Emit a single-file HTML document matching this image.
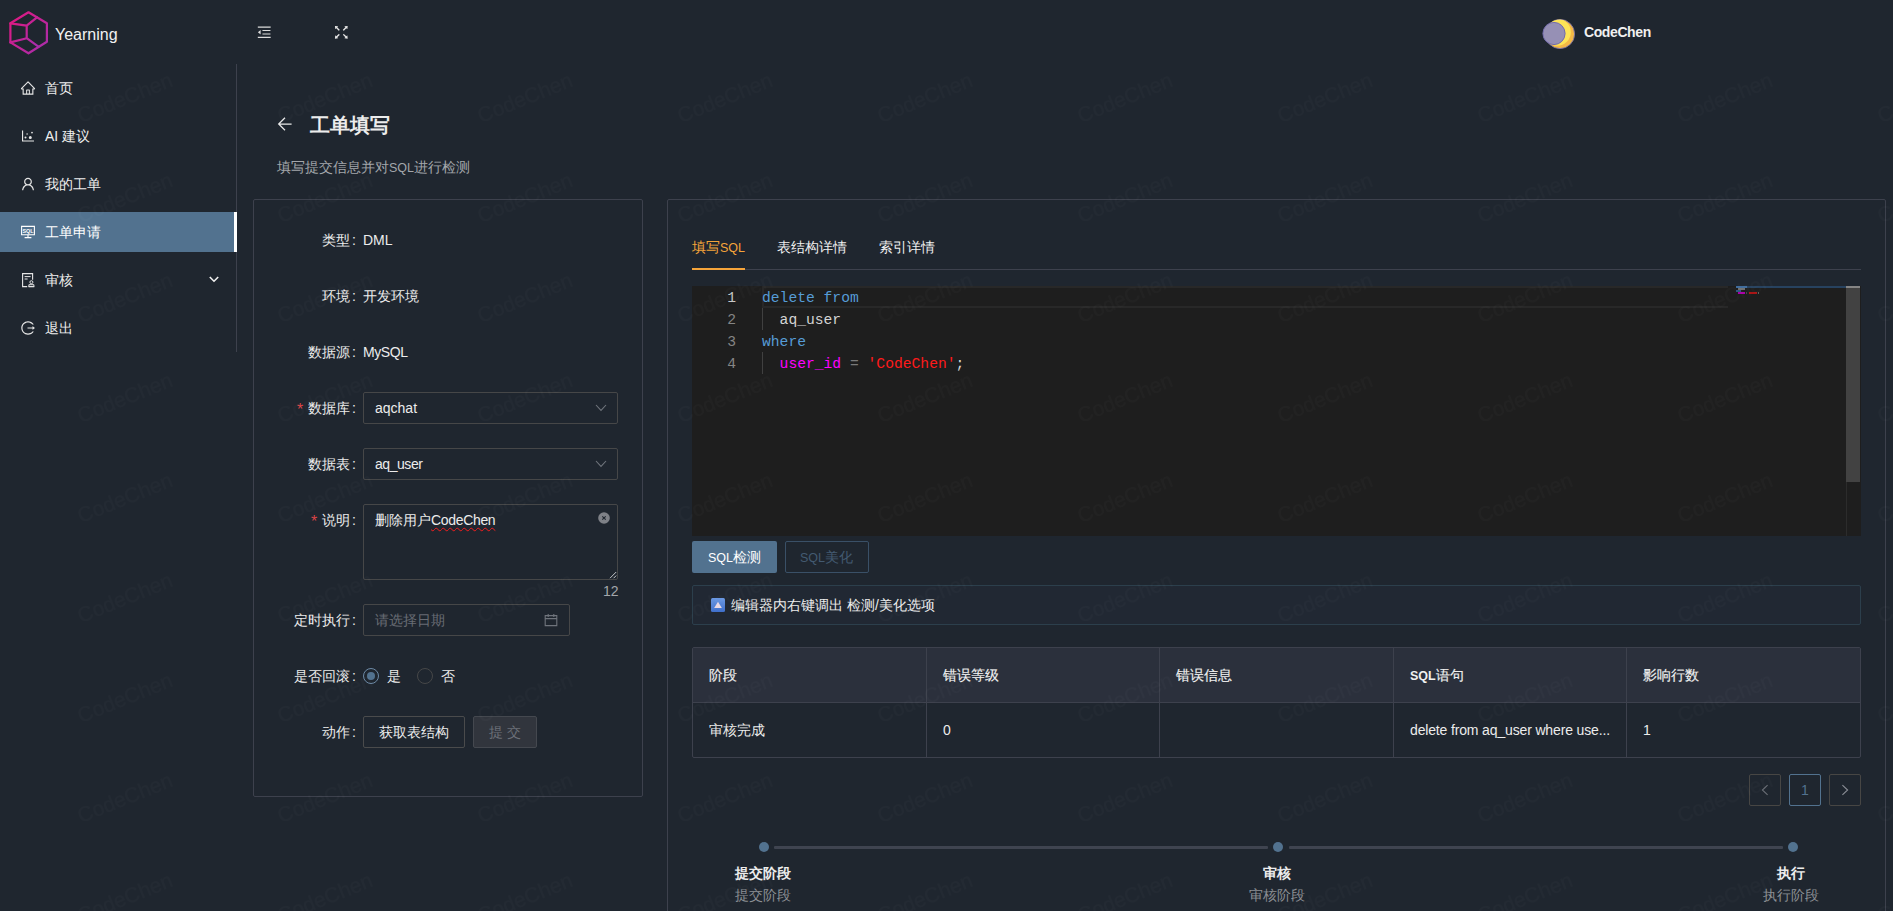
<!DOCTYPE html>
<html lang="zh">
<head>
<meta charset="utf-8">
<title>Yearning</title>
<style>
*{box-sizing:border-box;margin:0;padding:0}
html,body{width:1893px;height:911px;overflow:hidden;background:#1f262f}
body{font-family:"Liberation Sans",sans-serif;font-size:14px;color:#dedede;position:relative}
.abs{position:absolute}
.q{font-size:12.5px}
.t{position:absolute;white-space:nowrap;line-height:22px;height:22px}
svg{display:block;position:absolute;overflow:visible}
/* watermark */
/* sidebar */
#side-border{left:236px;top:64px;width:1px;height:288px;background:#3d414d}
.mi{position:absolute;left:0;width:237px;height:40px}
.mi .t{left:45px;top:9px;color:#eeeeee}
.mi.sel{background:#52728f;border-right:3px solid #fff}
.mi.sel .t{color:#fff}
/* cards */
.card{position:absolute;border:1px solid #3d414d;border-radius:2px}
.lbl{position:absolute;white-space:nowrap;line-height:22px;text-align:right;width:120px;left:236px;color:#ececec}
.req:before{content:"*";color:#dc4446;margin-right:5px;font-size:16px;position:relative;top:2px;font-family:"Liberation Sans",sans-serif}
.lbl i{font-style:normal;margin-left:2px;margin-right:0}
.val{position:absolute;left:363px;white-space:nowrap;line-height:22px;color:#ececec}
.inp{position:absolute;border:1px solid #464748;border-radius:2px}
pre.ln,pre.code{position:absolute;font-family:"Liberation Mono",monospace;font-size:14.67px;line-height:22px;white-space:pre}
pre.ln{color:#858585}
pre.code{color:#d4d4d4}
.k{color:#569cd6}.m{color:#ff00ff}.s{color:#ff1a1a}.o{color:#7a7a7a}
.th{font-weight:500;color:#f0f0f0;-webkit-text-stroke:0.15px #f0f0f0}
.th .q{font-weight:bold;-webkit-text-stroke:0}
.td{color:#ececec;letter-spacing:-0.15px}
.dot{width:10px;height:10px;border-radius:50%;background:#52728f}
.st{width:120px;text-align:center;font-weight:bold;color:#ececec}
.sd{width:120px;text-align:center;color:#8c8f94}
</style>
</head>
<body>
<!-- ============ SIDEBAR ============ -->
<div id="sidebar">
  <svg id="logo" style="left:8px;top:10px" width="42" height="46" viewBox="8 10 42 46">
    <defs><linearGradient id="lg" x1="0" y1="0" x2="1" y2="1"><stop offset="0" stop-color="#e3177f"/><stop offset="1" stop-color="#a52fae"/></linearGradient></defs>
    <g fill="none" stroke="url(#lg)" stroke-width="2.2" stroke-linejoin="round" stroke-linecap="round">
      <path d="M28.5 12.3 L46.9 23.3 L46.9 41.8 L28.5 53.3 L10.4 42.4 L10.4 23.3 Z"/>
      <path d="M10.4 23.3 L26.7 25.6 L37 17.3 M26.7 25.6 L26.7 38.2 L10.4 42.4 M26.7 38.2 L38.4 46.6"/>
    </g>
  </svg>
  <div class="t" style="left:55px;top:24.3px;font-size:16px;color:#f2f2f2">Yearning</div>
  <div id="side-border" class="abs"></div>

  <div class="mi" style="top:68px"><div class="t">首页</div></div>
  <div class="mi" style="top:116px"><div class="t">AI 建议</div></div>
  <div class="mi" style="top:164px"><div class="t">我的工单</div></div>
  <div class="mi sel" style="top:212px"><div class="t">工单申请</div></div>
  <div class="mi" style="top:260px"><div class="t">审核</div></div>
  <div class="mi" style="top:308px"><div class="t">退出</div></div>
  <svg style="left:20px;top:80px" width="16" height="16" viewBox="0 0 1024 1024"><path fill="#e6e6e6" d="M946.5 505L560.1 118.8l-25.9-25.9a31.5 31.5 0 00-44.4 0L77.5 505a63.9 63.9 0 00-18.8 46c.4 35.2 29.7 63.300 64.900 63.300h42.500V940h691.800V614.300h43.400c17.100 0 33.200-6.700 45.300-18.800a63.600 63.600 0 0018.700-45.300c0-17-6.700-33.100-18.800-45.200zM568 868H456V664h112v204zm217.900-325.700V868H632V640c0-22.100-17.900-40-40-40H432c-22.100 0-40 17.900-40 40v228H238.100V542.300h-96l370-369.700 23.100 23.100L882 542.300h-96.100z"/></svg>
  <svg style="left:20px;top:128px" width="16" height="16" viewBox="0 0 1024 1024"><path fill="#e6e6e6" d="M888 792H200V168c0-4.400-3.600-8-8-8h-56c-4.400 0-8 3.600-8 8v688c0 4.400 3.600 8 8 8h752c4.400 0 8-3.600 8-8v-56c0-4.400-3.600-8-8-8zM288 604a64 64 0 10128 0 64 64 0 10-128 0zm118-224a48 48 0 1096 0 48 48 0 10-96 0zm158 228a96 96 0 10192 0 96 96 0 10-192 0zm148-314a56 56 0 10112 0 56 56 0 10-112 0z"/></svg>
  <svg style="left:20px;top:176px" width="16" height="16" viewBox="0 0 1024 1024"><path fill="#e6e6e6" d="M858.5 763.6a374 374 0 00-80.600-119.500 375.630 375.630 0 00-119.500-80.600c-.400-.200-.800-.300-1.200-.500C719.500 518 760 444.700 760 362c0-137-111-248-248-248S264 225 264 362c0 82.700 40.500 156 102.800 201.100-.400.200-.800.300-1.200.500-44.800 18.900-85 46-119.500 80.600a375.630 375.630 0 00-80.600 119.500A371.700 371.700 0 00136 901.800a8 8 0 008 8.200h60c4.400 0 7.900-3.500 8-7.800 2-77.200 33-149.500 87.800-204.300 56.700-56.700 132-87.900 212.200-87.900s155.500 31.200 212.200 87.900C779 752.700 810 825 812 902.200c.1 4.400 3.600 7.800 8 7.800h60a8 8 0 008-8.200c-1-47.800-10.900-94.300-29.500-138.200zM512 534c-45.900 0-89.100-17.900-121.600-50.400S340 407.900 340 362c0-45.900 17.900-89.100 50.400-121.600S466.100 190 512 190s89.100 17.900 121.600 50.400S684 316.100 684 362c0 45.900-17.900 89.100-50.400 121.600S557.900 534 512 534z"/></svg>
  <svg style="left:20px;top:224px" width="16" height="16" viewBox="0 0 16 16"><path d="M1.6 2.4h12.8v8.4H1.6z" fill="none" stroke="#fff" stroke-width="1.1"/><path d="M8 10.8v2.6M4.6 13.6h6.8" stroke="#fff" stroke-width="1.1" fill="none"/><text x="8" y="8.6" text-anchor="middle" font-family="Liberation Sans, sans-serif" font-weight="bold" font-size="5.4" fill="#fff">SQL</text></svg>
  <svg style="left:20px;top:272px" width="16" height="16" viewBox="0 0 16 16"><path d="M7.2 14.6H2.6V1.6h10v6.2" fill="none" stroke="#e6e6e6" stroke-width="1.1"/><path d="M4.6 4.6h6M4.6 7h3" stroke="#e6e6e6" stroke-width="1" fill="none"/><circle cx="11.4" cy="10.2" r="1.5" fill="none" stroke="#e6e6e6" stroke-width="1"/><path d="M8.9 14.6v-1.9h5v1.9zM8.4 14.7h6" fill="none" stroke="#e6e6e6" stroke-width="1"/></svg>
  <svg style="left:20px;top:320px" width="16" height="16" viewBox="0 0 1024 1024"><path fill="#e6e6e6" d="M868 732h-70.300c-4.800 0-9.300 2.100-12.300 5.800-7 8.500-14.500 16.700-22.400 24.500a353.840 353.840 0 01-112.700 75.900A352.800 352.800 0 01512.400 866c-47.900 0-94.300-9.400-137.900-27.800a353.840 353.840 0 01-112.700-75.900 353.280 353.280 0 01-76-112.500C167.300 606.200 158 559.900 158 512s9.400-94.200 27.800-137.800c17.800-42.100 43.400-80 76-112.500s70.500-58.100 112.700-75.900c43.600-18.400 90-27.800 137.900-27.800 47.900 0 94.300 9.300 137.900 27.800 42.200 17.800 80.100 43.400 112.700 75.900 7.900 7.900 15.300 16.100 22.400 24.500 3 3.700 7.600 5.800 12.300 5.800H868c6.300 0 10.200-7 6.700-12.300C798 160.500 663.800 81.600 511.300 82 271.700 82.600 79.600 277.100 82 516.400 84.400 751.900 276.200 942 512.400 942c152.100 0 285.700-78.800 362.300-197.700 3.400-5.300-.4-12.300-6.700-12.300zm88.900-226.300L815 393.700c-5.300-4.200-13-.4-13 6.300v76H488c-4.400 0-8 3.600-8 8v56c0 4.400 3.600 8 8 8h314v76c0 6.700 7.800 10.500 13 6.300l141.900-112a8 8 0 000-12.600z"/></svg>
  <svg style="left:209px;top:276px" width="10" height="7" viewBox="0 0 10 7"><path d="M0.8 1l4.2 4.2L9.2 1" fill="none" stroke="#f0f0f0" stroke-width="1.6"/></svg>
</div>

<!-- ============ HEADER ============ -->
<div id="header">
  <svg style="left:255.6px;top:23.7px" width="16.5" height="16.5" viewBox="0 0 1024 1024"><path fill="#dcdcdc" d="M408 442h480c4.400 0 8-3.600 8-8v-56c0-4.400-3.600-8-8-8H408c-4.400 0-8 3.600-8 8v56c0 4.400 3.600 8 8 8zm-8 204c0 4.400 3.600 8 8 8h480c4.400 0 8-3.600 8-8v-56c0-4.400-3.600-8-8-8H408c-4.400 0-8 3.600-8 8v56zm504-486H120c-4.400 0-8 3.600-8 8v56c0 4.400 3.600 8 8 8h784c4.400 0 8-3.600 8-8v-56c0-4.400-3.600-8-8-8zm0 632H120c-4.400 0-8 3.600-8 8v56c0 4.400 3.600 8 8 8h784c4.400 0 8-3.600 8-8v-56c0-4.400-3.600-8-8-8zM115.400 518.900L271.700 642c5.800 4.600 14.400.5 14.400-6.900V388.900c0-7.400-8.500-11.500-14.400-6.900L115.400 505.100a8.740 8.740 0 000 13.800z"/></svg>
  <svg style="left:331.7px;top:22.6px" width="18.6" height="18.6" viewBox="0 0 1024 1024"><path fill="#e6e6e6" d="M290 236.400l43.900-43.900a8.010 8.010 0 00-4.700-13.600L169 160c-5.100-.600-9.500 3.700-8.900 8.900L179 329.100c.8 6.600 8.900 9.400 13.600 4.700l43.700-43.700L370 423.700c3.100 3.100 8.200 3.100 11.300 0l42.400-42.300c3.100-3.100 3.100-8.200 0-11.300L290 236.400zm352.700 187.300c3.100 3.100 8.200 3.100 11.300 0l133.700-133.600 43.700 43.700a8.010 8.010 0 0013.600-4.700L863.900 169c.6-5.100-3.700-9.500-8.900-8.900L694.800 179c-6.600.8-9.400 8.900-4.700 13.600l43.900 43.900L600.300 370a8.030 8.030 0 000 11.300l42.400 42.400zM845 694.900c-.8-6.600-8.900-9.400-13.600-4.700l-43.700 43.700L654 600.300a8.030 8.030 0 00-11.300 0l-42.400 42.300a8.030 8.030 0 000 11.300L734 787.600l-43.900 43.900a8.010 8.010 0 004.700 13.600L855 864c5.100.6 9.500-3.700 8.900-8.900L845 694.900zm-463.700-94.600a8.030 8.030 0 00-11.300 0L236.300 733.900l-43.700-43.700a8.010 8.010 0 00-13.600 4.700L160.100 855c-.6 5.100 3.700 9.500 8.900 8.900L329.200 845c6.600-.8 9.400-8.900 4.700-13.600L290 787.600 423.700 654c3.100-3.100 3.100-8.200 0-11.300l-42.400-42.400z"/></svg>
  <div class="abs" id="avatar" style="left:1542px;top:18px;width:33px;height:33px">
    <svg width="33" height="33" viewBox="0 0 33 33" style="left:0;top:0">
      <defs><clipPath id="yc"><circle cx="18" cy="16" r="14.4"/></clipPath></defs>
      <circle cx="18" cy="16" r="14.6" fill="#f4b846" stroke="#7a73a9" stroke-width="0.9"/>
      <circle cx="15.2" cy="14.2" r="13.6" fill="#fde457" clip-path="url(#yc)"/>
      <circle cx="12" cy="15.5" r="11.1" fill="#9690b5" stroke="#736cab" stroke-width="1"/>
    </svg>
  </div>
  <div class="t" style="left:1584px;top:21px;font-weight:bold;letter-spacing:-0.4px;color:#f0f0f0">CodeChen</div>
</div>

<!-- ============ PAGE HEADER ============ -->
<div id="pagehead">
  <svg style="left:277px;top:116.1px" width="16" height="16" viewBox="0 0 16 16"><path d="M14.6 8H2M8 1.7L1.7 8l6.3 6.3" fill="none" stroke="#e9e9e9" stroke-width="1.25"/></svg>
  <div class="t" style="left:309.6px;top:109px;font-size:20px;line-height:32px;height:32px;font-weight:bold;color:#ececec">工单填写</div>
  <div class="t" style="left:277px;top:156px;color:#a3a6ab">填写提交信息并对<span class="q">SQL</span>进行检测</div>
</div>

<!-- ============ LEFT CARD (FORM) ============ -->
<div class="card" style="left:253px;top:199px;width:390px;height:598px"></div>
<div class="lbl" style="top:229px">类型<i>:</i></div><div class="val" style="top:229px">DML</div>
<div class="lbl" style="top:285px">环境<i>:</i></div><div class="val" style="top:285px">开发环境</div>
<div class="lbl" style="top:341px">数据源<i>:</i></div><div class="val" style="top:341px;letter-spacing:-0.4px">MySQL</div>

<div class="lbl req" style="top:397px">数据库<i>:</i></div>
<div class="inp" style="left:363px;top:392px;width:255px;height:32px"></div>
<div class="val" style="left:375px;top:397px">aqchat</div>
<svg style="left:595px;top:404px" width="12" height="8" viewBox="0 0 12 8"><path d="M1 1l5 5.4L11 1" fill="none" stroke="#6f747c" stroke-width="1.1"/></svg>

<div class="lbl" style="top:453px">数据表<i>:</i></div>
<div class="inp" style="left:363px;top:448px;width:255px;height:32px"></div>
<div class="val" style="left:375px;top:453px;letter-spacing:-0.45px">aq_user</div>
<svg style="left:595px;top:460px" width="12" height="8" viewBox="0 0 12 8"><path d="M1 1l5 5.4L11 1" fill="none" stroke="#6f747c" stroke-width="1.1"/></svg>

<div class="lbl req" style="top:509px">说明<i>:</i></div>
<div class="inp" style="left:363px;top:504px;width:255px;height:76px"></div>
<div class="val" style="left:375px;top:509px">删除用户<span style="letter-spacing:-0.33px;text-decoration:underline wavy #f21d1d 1px;text-underline-offset:1.5px;text-decoration-skip-ink:none">CodeChen</span></div>
<svg style="left:598px;top:512px" width="12" height="12" viewBox="0 0 12 12"><circle cx="6" cy="6" r="5.8" fill="#7e8187"/><path d="M4.3 4.3l3.4 3.4M7.7 4.3l-3.4 3.4" stroke="#1f262f" stroke-width="1.1"/></svg>
<svg style="left:607px;top:569px" width="10" height="10" viewBox="0 0 10 10"><path d="M9.2 3L3 9.2M9.2 6.6L6.6 9.2" stroke="#c4c6ca" stroke-width="1" fill="none"/></svg>
<div class="t" style="left:603px;top:580px;color:#a3a6ab;font-size:14px">12</div>

<div class="lbl" style="top:609px">定时执行<i>:</i></div>
<div class="inp" style="left:363px;top:604px;width:207px;height:32px"></div>
<div class="val" style="left:375px;top:609px;color:#686c74">请选择日期</div>
<svg style="left:544px;top:613px" width="14" height="14" viewBox="0 0 14 14"><path d="M1.2 2.6h11.6v10H1.2zM1.2 5.6h11.6M4.2 1v3M9.8 1v3" fill="none" stroke="#6f747c" stroke-width="1.1"/></svg>

<div class="lbl" style="top:665px">是否回滚<i>:</i></div>
<div class="abs" style="left:363px;top:668px;width:16px;height:16px;border:1px solid #6d8aa6;border-radius:50%"></div>
<div class="abs" style="left:367px;top:672px;width:8px;height:8px;background:#52728f;border-radius:50%"></div>
<div class="val" style="left:387px;top:665px">是</div>
<div class="abs" style="left:417px;top:668px;width:16px;height:16px;border:1px solid #464748;border-radius:50%"></div>
<div class="val" style="left:441px;top:665px">否</div>

<div class="lbl" style="top:721px">动作<i>:</i></div>
<div class="inp" style="left:363px;top:716px;width:102px;height:32px;border-color:#4a4b4c"></div>
<div class="val" style="left:379px;top:721px;color:#ececec">获取表结构</div>
<div class="inp" style="left:473px;top:716px;width:64px;height:32px;background:#31353d;border-color:#44484f"></div>
<div class="val" style="left:489px;top:721px;color:#6c7078">提 交</div>

<!-- ============ RIGHT CARD ============ -->
<div class="card" style="left:667px;top:199px;width:1219px;height:760px"></div>
<!-- tabs -->
<div class="abs" style="left:692px;top:269px;width:1169px;height:1px;background:#3d414d"></div>
<div class="t" style="left:692px;top:236px;color:#f5a43a">填写<span class="q">SQL</span></div>
<div class="abs" style="left:692px;top:268px;width:53px;height:2px;background:#f5a43a"></div>
<div class="t" style="left:777px;top:236px;color:#efefef">表结构详情</div>
<div class="t" style="left:879px;top:236px;color:#efefef">索引详情</div>

<!-- editor -->
<div id="editor" class="abs" style="left:692px;top:286px;width:1169px;height:250px;background:#1e1e1e;overflow:hidden">
  <div class="abs" style="left:70px;top:0;width:966px;height:22px;border:2px solid #282828;border-right:0"></div>
  <div class="abs" style="left:1044px;top:0;width:110px;height:2px;background:#27425f"></div>
  <div class="abs" style="left:1154px;top:0;width:14px;height:196px;background:#424242"></div>
  <div class="abs" style="left:1154px;top:0;width:14px;height:2px;background:#858585"></div>
  <div class="abs" style="left:1154px;top:196px;width:1px;height:54px;background:#2c2c2c"></div>
  <div class="abs" style="left:70px;top:22px;width:1px;height:22px;background:#404040"></div>
  <div class="abs" style="left:70px;top:66px;width:1px;height:22px;background:#404040"></div>
  <pre class="ln" style="left:0;top:1px;width:44px;text-align:right"><span style="color:#c6c6c6">1</span>
2
3
4</pre>
  <pre class="code" style="left:70px;top:1px"><span class="k">delete from</span>
  aq_user
<span class="k">where</span>
  <span class="m">user_id</span> <span class="o">=</span> <span class="s">'CodeChen'</span>;</pre>
  <!-- minimap preview -->
  <div class="abs" style="left:1044px;top:0;width:11px;height:2px;background:#3f6c9d"></div>
  <div class="abs" style="left:1046px;top:2px;width:7px;height:2px;background:#707070"></div>
  <div class="abs" style="left:1044px;top:4px;width:5px;height:2px;background:#30577f"></div>
  <div class="abs" style="left:1046px;top:6px;width:7px;height:2px;background:#a900a9"></div>
  <div class="abs" style="left:1054px;top:6px;width:1px;height:2px;background:#4a4a4a"></div>
  <div class="abs" style="left:1057px;top:6px;width:8px;height:2px;background:#a81515"></div>
  <div class="abs" style="left:1066px;top:6px;width:1px;height:2px;background:#606060"></div>
</div>

<!-- buttons -->
<div class="abs" style="left:692px;top:541px;width:85px;height:32px;background:#52728f;border-radius:2px"></div>
<div class="t" style="left:708px;top:546px;color:#fff"><span class="q">SQL</span>检测</div>
<div class="inp" style="left:785px;top:541px;width:84px;height:32px;border-color:#3a5067"></div>
<div class="t" style="left:800px;top:546px;color:#435a71"><span class="q">SQL</span>美化</div>

<!-- alert -->
<div class="abs" style="left:692px;top:585px;width:1169px;height:40px;border:1px solid #2c3f4c;border-radius:2px;background:#212833"></div>
<svg style="left:711px;top:598px" width="14" height="14" viewBox="0 0 14 14"><defs><linearGradient id="ag" x1="0" y1="0" x2="0" y2="1"><stop offset="0" stop-color="#6a98e2"/><stop offset="1" stop-color="#3f6fcb"/></linearGradient></defs><rect x="0" y="0" width="14" height="14" rx="1.5" fill="url(#ag)"/><path d="M7 3.7L10.9 9.9H3.1z" fill="#ead9e4"/></svg>
<div class="t" style="left:731px;top:594px;color:#ececec">编辑器内右键调出 检测/美化选项</div>

<!-- table -->
<div class="abs" style="left:692px;top:647px;width:1169px;height:111px;border:1px solid #3d414d;border-radius:2px"></div>
<div class="abs" style="left:693px;top:648px;width:1167px;height:54px;background:#2b303c"></div>
<div class="abs" style="left:693px;top:702px;width:1167px;height:1px;background:#3d414d"></div>
<div class="abs" style="left:926px;top:648px;width:1px;height:109px;background:#3d414d"></div>
<div class="abs" style="left:1159px;top:648px;width:1px;height:109px;background:#3d414d"></div>
<div class="abs" style="left:1393px;top:648px;width:1px;height:109px;background:#3d414d"></div>
<div class="abs" style="left:1626px;top:648px;width:1px;height:109px;background:#3d414d"></div>
<div class="t th" style="left:709px;top:664px">阶段</div>
<div class="t th" style="left:943px;top:664px">错误等级</div>
<div class="t th" style="left:1176px;top:664px">错误信息</div>
<div class="t th" style="left:1410px;top:664px"><span class="q">SQL</span>语句</div>
<div class="t th" style="left:1643px;top:664px">影响行数</div>
<div class="t td" style="left:709px;top:719px">审核完成</div>
<div class="t td" style="left:943px;top:719px">0</div>
<div class="t td" style="left:1410px;top:719px">delete from aq_user where use...</div>
<div class="t td" style="left:1643px;top:719px">1</div>

<!-- pagination -->
<div class="inp" style="left:1749px;top:774px;width:32px;height:32px;border-color:#474644"></div>
<svg style="left:1760px;top:784px" width="10" height="12" viewBox="0 0 10 12"><path d="M7.6 1.2L2.4 6l5.2 4.8" fill="none" stroke="#6a6e76" stroke-width="1.1"/></svg>
<div class="inp" style="left:1789px;top:774px;width:32px;height:32px;border-color:#52728f"></div>
<div class="t" style="left:1789px;top:779px;width:32px;text-align:center;color:#52728f">1</div>
<div class="inp" style="left:1829px;top:774px;width:32px;height:32px;border-color:#474644"></div>
<svg style="left:1840px;top:784px" width="10" height="12" viewBox="0 0 10 12"><path d="M2.4 1.2L7.6 6l-5.2 4.8" fill="none" stroke="#8a8e96" stroke-width="1.1"/></svg>

<!-- steps -->
<div class="abs" style="left:774px;top:846px;width:494px;height:3px;background:#3f4450;border-radius:1px"></div>
<div class="abs" style="left:1289px;top:846px;width:494px;height:3px;background:#3f4450;border-radius:1px"></div>
<div class="abs dot" style="left:759px;top:842px"></div>
<div class="abs dot" style="left:1273px;top:842px"></div>
<div class="abs dot" style="left:1788px;top:842px"></div>
<div class="t st" style="left:702.6px;top:862px">提交阶段</div>
<div class="t sd" style="left:702.6px;top:884px">提交阶段</div>
<div class="t st" style="left:1216.8px;top:862px">审核</div>
<div class="t sd" style="left:1216.8px;top:884px">审核阶段</div>
<div class="t st" style="left:1731px;top:862px">执行</div>
<div class="t sd" style="left:1731px;top:884px">执行阶段</div>


<svg id="wm" width="1893" height="911" style="left:0;top:0;pointer-events:none;z-index:50">
  <defs><pattern id="wmp" x="25" y="48" width="200" height="100" patternUnits="userSpaceOnUse">
    <text x="100" y="57" text-anchor="middle" transform="rotate(-22 100 50)" font-family="Liberation Sans, sans-serif" font-size="21" fill="#ffffff" fill-opacity="0.021">CodeChen</text>
  </pattern></defs>
  <rect x="0" y="52" width="1893" height="859" fill="url(#wmp)"/>
</svg>
</body>
</html>
